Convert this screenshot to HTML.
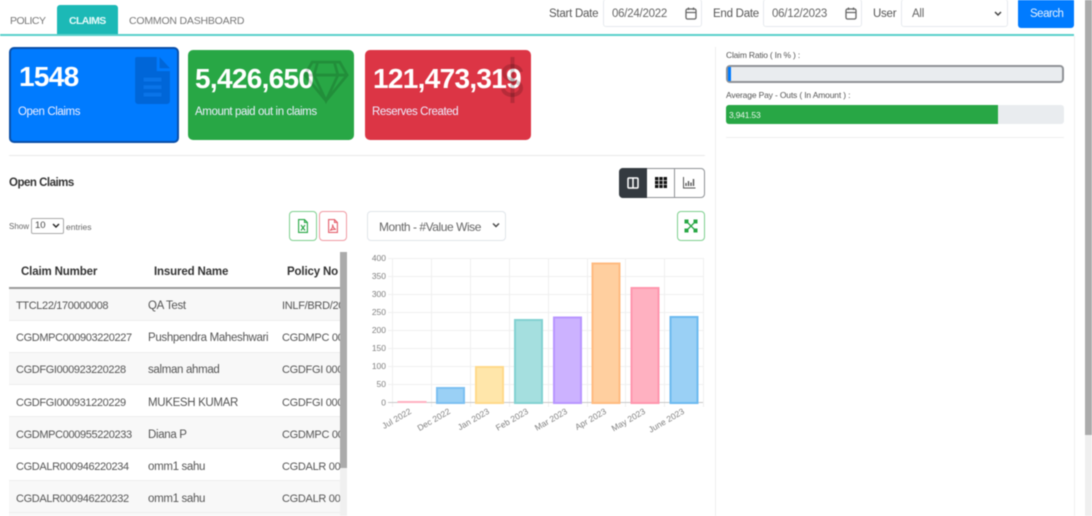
<!DOCTYPE html>
<html><head><meta charset="utf-8"><style>
html,body{margin:0;padding:0;background:#fff;width:1092px;height:516px;overflow:hidden}
body{position:relative;font-family:"Liberation Sans",sans-serif;color:#495057}
#p{position:absolute;left:0;top:0;width:1092px;height:516px;overflow:hidden;filter:blur(.45px)}
.a{position:absolute;white-space:nowrap}
.box{position:absolute;box-sizing:border-box}
.inp{position:absolute;box-sizing:border-box;border:1px solid #e6eaee;border-radius:3px;background:#fff;height:28px;top:-1px}
.l{font-size:11.5px;color:#555;top:8px;letter-spacing:-.25px}
.dt{top:8px;font-size:11.5px;color:#666;letter-spacing:-.25px}
.card{position:absolute;box-sizing:border-box;border-radius:5px;color:#fff}
.num{position:absolute;font-weight:bold;font-size:28px;top:14px;line-height:30px;letter-spacing:-.7px}
.sub{position:absolute;font-size:11.5px;letter-spacing:-.4px;line-height:14px;color:#eef}
.cell{position:absolute;font-size:11.5px;color:#555;line-height:14px;white-space:nowrap}
.c1{left:16px;font-size:11px;letter-spacing:-.36px}
.c2{left:148px;letter-spacing:-.33px}
.c3{left:0;font-size:11px;letter-spacing:-.3px}
.th{position:absolute;font-size:11.5px;font-weight:bold;color:#333;top:265px;line-height:14px;white-space:nowrap;letter-spacing:-.15px}
.row{position:absolute;left:9px;width:331px;height:32px;border-bottom:1px solid #eee;box-sizing:border-box}
.ic{position:absolute;overflow:visible}
</style></head><body><div id="p">

<!-- tabs -->
<div class="a" style="left:10px;top:15px;font-size:10.5px;letter-spacing:-.5px;color:#777">POLICY</div>
<div class="box" style="left:57px;top:5px;width:61px;height:30px;background:#1cb9b6;border-radius:3px 3px 0 0"></div>
<div class="a" style="left:69px;top:15px;font-size:10.5px;letter-spacing:-.6px;font-weight:bold;color:#e8fbfa">CLAIMS</div>
<div class="a" style="left:129px;top:15px;font-size:10.5px;letter-spacing:-.2px;color:#777">COMMON DASHBOARD</div>
<div class="box" style="left:0;top:34px;width:1074px;height:2px;background:#5ad0cb"></div>

<!-- top filter -->
<div class="a l" style="left:549px">Start Date</div>
<div class="inp" style="left:603px;width:99px"></div>
<div class="a dt" style="left:612px">06/24/2022</div>
<svg class="a" style="left:685px;top:7px" width="12" height="13" viewBox="0 0 12 13" fill="none" stroke="#666" stroke-width="1.3"><rect x="1" y="2" width="10" height="10" rx="1.500"/><path d="M1 5.500h10M3.500 .5v2.500M8.500 .5v2.500"/></svg>
<div class="a l" style="left:713px">End Date</div>
<div class="inp" style="left:763px;width:99px"></div>
<div class="a dt" style="left:772px">06/12/2023</div>
<svg class="a" style="left:845px;top:7px" width="12" height="13" viewBox="0 0 12 13" fill="none" stroke="#666" stroke-width="1.3"><rect x="1" y="2" width="10" height="10" rx="1.500"/><path d="M1 5.500h10M3.500 .5v2.500M8.500 .5v2.500"/></svg>
<div class="a l" style="left:873px">User</div>
<div class="inp" style="left:901px;width:107px"></div>
<div class="a dt" style="left:912px">All</div>
<svg class="a" style="left:993px;top:10px" width="10" height="8" viewBox="0 0 10 8" fill="none" stroke="#444" stroke-width="1.5"><path d="M2 2l3 3 3-3"/></svg>
<div class="box" style="left:1018px;top:-2px;width:56px;height:30px;background:#007bff;border-radius:3px"></div>
<div class="a" style="left:1030px;top:8px;font-size:11.5px;letter-spacing:-.5px;color:#e6f1ff">Search</div>

<!-- page scrollbar -->
<div class="box" style="left:1085px;top:0;width:7px;height:516px;background:#efefef"></div>
<div class="box" style="left:1085px;top:0;width:7px;height:435px;background:#ababab"></div>

<!-- cards -->
<div class="card" style="left:9px;top:47px;width:170px;height:96px;background:#007bff;border:2px solid #0a4fa8">
 <div class="num" style="left:8px;top:13px">1548</div>
 <div class="sub" style="left:7px;top:56px">Open Claims</div>
 <svg class="ic" style="left:124px;top:8px" width="35" height="47" viewBox="0 0 37 50"><path d="M2 0H23V15H37V47a3 3 0 0 1-3 3H3a3 3 0 0 1-3-3V2a2 2 0 0 1 2-2zM26 0L37 12H26z" fill="#0066d8"/><path d="M9 22H28v4H9zM9 30H28v4H9zM9 38H28v4H9z" fill="#0a74e8"/></svg>
</div>
<div class="card" style="left:188px;top:50px;width:166px;height:90px;background:#28a745">
 <div class="num" style="left:7px">5,426,650</div>
 <div class="sub" style="left:7px;top:55px">Amount paid out in claims</div>
 <svg class="ic" style="left:115px;top:9px" width="46" height="45" viewBox="0 0 50 46" fill="none" stroke="#000" stroke-opacity=".15" stroke-width="3"><path d="M10 2H40L48 16 25 44 2 16zM2 16H48M16 2L12 16 25 44 38 16 34 2"/></svg>
</div>
<div class="card" style="left:365px;top:50px;width:166px;height:90px;background:#dc3545">
 <div class="num" style="left:8px">121,473,319</div>
 <div class="sub" style="left:7px;top:55px">Reserves Created</div>
 <svg class="ic" style="left:137px;top:7px" width="21" height="46" viewBox="0 0 21 46" fill="none" stroke="#000" stroke-opacity=".17" stroke-width="4"><path d="M10.500 0V46"/><path d="M19 15C18 11 14 9 10 9 5 9 2 12 2 16c0 9 17 6 17 15 0 4-4 7-9 7-4 0-8-2-9-6"/></svg>
</div>

<!-- right panel -->
<div class="box" style="left:715px;top:47px;width:1px;height:469px;background:#eee"></div>
<div class="box" style="left:1074px;top:36px;width:1px;height:480px;background:#f0f0f0"></div>
<div class="a" style="left:726px;top:50px;font-size:8.5px;letter-spacing:-.2px;color:#555">Claim Ratio ( In % ) :</div>
<div class="box" style="left:726px;top:65px;width:338px;height:18px;background:#e9ecef;border:2px solid #8f9296;border-radius:4px"><div style="width:3px;height:14px;background:#007bff"></div></div>
<div class="a" style="left:726px;top:90px;font-size:8.5px;letter-spacing:-.16px;color:#555">Average Pay - Outs ( In Amount ) :</div>
<div class="box" style="left:726px;top:105px;width:338px;height:19px;background:#e9ecef;border-radius:3px;overflow:hidden"><div style="width:272px;height:19px;background:#28a745"></div></div>
<div class="a" style="left:729px;top:110px;font-size:8.5px;letter-spacing:-.2px;color:#eaf7ec">3,941.53</div>
<div class="box" style="left:726px;top:137px;width:338px;height:1px;background:#eee"></div>

<!-- divider -->
<div class="box" style="left:9px;top:155px;width:696px;height:1px;background:#eaeaea"></div>

<div class="a" style="left:9px;top:177px;font-size:11.5px;font-weight:bold;color:#333;letter-spacing:-.5px">Open Claims</div>

<!-- view buttons -->
<div class="box" style="left:619px;top:168px;width:86px;height:30px;border:1px solid #8f9296;border-radius:4px"></div>
<div class="box" style="left:619px;top:168px;width:28px;height:30px;background:#343a40;border-radius:4px 0 0 4px"></div>
<div class="box" style="left:674px;top:168px;width:1px;height:30px;background:#8f9296"></div>
<svg class="a" style="left:627px;top:177px" width="12" height="12" viewBox="0 0 12 12" fill="none" stroke="#fff" stroke-width="1.500"><rect x="1" y="1" width="10" height="10" rx="1"/><path d="M6 1v10"/></svg>
<svg class="a" style="left:655px;top:177px" width="12" height="11" viewBox="0 0 12 11" fill="#111"><path d="M0 0h3.400v3.200H0zM4.300 0h3.400v3.200H4.300zM8.600 0H12v3.200H8.600zM0 3.900h3.400v3.200H0zM4.300 3.900h3.400v3.200H4.300zM8.600 3.900H12v3.200H8.600zM0 7.800h3.400V11H0zM4.300 7.800h3.400V11H4.300zM8.600 7.800H12V11H8.600z"/></svg>
<svg class="a" style="left:683px;top:176px" width="13" height="13" viewBox="0 0 13 13" fill="none" stroke="#555"><path d="M.5 1v11h12"/><path d="M3 10V7M5.500 10V5M8 10V6.500M10.500 10V3" stroke-width="1.400"/></svg>

<!-- show entries -->
<div class="a" style="left:9px;top:222px;font-size:8px;color:#666">Show</div>
<div class="box" style="left:31px;top:218px;width:33px;height:16px;border:1px solid #aaa;border-radius:2px"></div>
<div class="a" style="left:35px;top:220px;font-size:9.5px;color:#444">10</div>
<svg class="a" style="left:52px;top:223px" width="8" height="6" viewBox="0 0 8 6" fill="none" stroke="#222" stroke-width="1.400"><path d="M1 1l3 3 3-3"/></svg>
<div class="a" style="left:66px;top:222px;font-size:8.5px;color:#666">entries</div>

<!-- export -->
<div class="box" style="left:289px;top:211px;width:28px;height:30px;border:1px solid #7fd08f;border-radius:4px"></div>
<svg class="a" style="left:298px;top:219px" width="10" height="14" viewBox="0 0 10 14" fill="none" stroke="#28a745" stroke-width="1.100"><path d="M.6.600H6.500L9.400 3.500V13.400H.6zM6.500.6V3.500H9.400M3 6l4 5.500M7 6l-4 5.500"/></svg>
<div class="box" style="left:319px;top:211px;width:28px;height:30px;border:1px solid #f09aa3;border-radius:4px"></div>
<svg class="a" style="left:328px;top:219px" width="10" height="14" viewBox="0 0 10 14" fill="none" stroke="#e4606d" stroke-width="1.100"><path d="M.6.600H6.500L9.400 3.500V13.400H.6zM6.500.6V3.500H9.400M2 11.500C4 10 5 7.500 4.500 5.500 5 8 6 10 8 10.500 6 10 4 10.500 2 11.500z"/></svg>

<!-- table -->
<div class="th" style="left:21px">Claim Number</div>
<div class="th" style="left:154px">Insured Name</div>
<div class="th" style="left:287px">Policy No</div>
<div class="box" style="left:9px;top:287px;width:331px;height:2px;background:#9a9a9a"></div>
<div class="row" style="top:289px;background:#f8f8f8"></div>
<div class="row" style="top:321px"></div>
<div class="row" style="top:353px;background:#f8f8f8"></div>
<div class="row" style="top:385px"></div>
<div class="row" style="top:417px;background:#f8f8f8"></div>
<div class="row" style="top:449px"></div>
<div class="row" style="top:481px;background:#f8f8f8"></div>
<div class="row" style="top:513px;height:3px;border:0;background:#f8f8f8"></div>

<div class="cell c1" style="top:299px">TTCL22/170000008</div><div class="cell c2" style="top:299px">QA Test</div>
<div class="cell c1" style="top:331px">CGDMPC000903220227</div><div class="cell c2" style="top:331px">Pushpendra Maheshwari</div>
<div class="cell c1" style="top:363px">CGDFGI000923220228</div><div class="cell c2" style="top:363px">salman ahmad</div>
<div class="cell c1" style="top:396px">CGDFGI000931220229</div><div class="cell c2" style="top:396px">MUKESH KUMAR</div>
<div class="cell c1" style="top:428px">CGDMPC000955220233</div><div class="cell c2" style="top:428px">Diana P</div>
<div class="cell c1" style="top:460px">CGDALR000946220234</div><div class="cell c2" style="top:460px">omm1 sahu</div>
<div class="cell c1" style="top:492px">CGDALR000946220232</div><div class="cell c2" style="top:492px">omm1 sahu</div>

<div class="box" style="left:282px;top:289px;width:58px;height:227px;overflow:hidden">
 <div class="cell c3" style="top:10px">INLF/BRD/2022</div>
 <div class="cell c3" style="top:42px">CGDMPC 00090</div>
 <div class="cell c3" style="top:74px">CGDFGI 000923</div>
 <div class="cell c3" style="top:107px">CGDFGI 000931</div>
 <div class="cell c3" style="top:139px">CGDMPC 00095</div>
 <div class="cell c3" style="top:171px">CGDALR 000946</div>
 <div class="cell c3" style="top:203px">CGDALR 000946</div>
</div>
<div class="box" style="left:340px;top:252px;width:7px;height:264px;background:#f0f0f0"></div>
<div class="box" style="left:340px;top:252px;width:7px;height:216px;background:#ababab"></div>

<!-- chart select -->
<div class="box" style="left:367px;top:211px;width:139px;height:30px;border:1px solid #e0e5ea;border-radius:4px"></div>
<div class="a" style="left:379px;top:220px;font-size:12px;letter-spacing:-.45px;color:#666">Month - #Value Wise</div>
<svg class="a" style="left:491px;top:222px" width="10" height="7" viewBox="0 0 10 7" fill="none" stroke="#444" stroke-width="1.400"><path d="M2 1.500l3 3 3-3"/></svg>
<div class="box" style="left:677px;top:211px;width:28px;height:30px;border:1px solid #7fd08f;border-radius:4px"></div>
<svg class="a" style="left:684px;top:219px" width="14" height="14" viewBox="0 0 14 14" fill="#28a745" stroke="#28a745"><path d="M3 3l8 8M11 3l-8 8" stroke-width="1.300"/><rect x="1" y="1" width="3" height="3"/><rect x="10" y="1" width="3" height="3"/><rect x="1" y="10" width="3" height="3"/><rect x="10" y="10" width="3" height="3"/></svg>

<!-- chart -->
<svg class="a" style="left:360px;top:245px" width="355" height="190" viewBox="360 245 355 190">
 <g stroke="#f0f0f0" stroke-width="1">
  <path d="M388 258.500H703M388 276.500H703M388 294.500H703M388 312.500H703M388 330.500H703M388 348.500H703M388 366.500H703M388 384.500H703"/>
  <path d="M392.500 258V407M431.500 258V407M470.500 258V407M509.500 258V407M548.500 258V407M587.500 258V407M625.500 258V407M664.500 258V407M703.500 258V407"/>
 </g>
 <path d="M388 402.500H703" stroke="#c8c8c8"/>
 <g stroke-width="2">
  <rect x="398" y="401.500" width="28" height="1" fill="#ffb1c1" stroke="#ffb1c1" stroke-width="1"/>
  <rect x="437" y="388" width="27" height="15" fill="#9ad0f5" stroke="#7cc0f2"/>
  <rect x="476" y="367" width="27" height="36" fill="#ffe6aa" stroke="#ffd98a"/>
  <rect x="515" y="320" width="27" height="83" fill="#a5dfdf" stroke="#82d2d2"/>
  <rect x="554" y="317.500" width="27" height="85.500" fill="#ccb2ff" stroke="#b896ff"/>
  <rect x="592.500" y="263.500" width="27" height="139.500" fill="#ffcf9f" stroke="#ffbb80"/>
  <rect x="631.500" y="288" width="27" height="115" fill="#ffb1c1" stroke="#ff96ae"/>
  <rect x="670.500" y="317" width="27" height="86" fill="#9ad0f5" stroke="#6cbaf0"/>
 </g>
 <g font-family="Liberation Sans,sans-serif" font-size="8.500" fill="#808080" text-anchor="end">
  <text x="386" y="261">400</text><text x="386" y="279">350</text><text x="386" y="297">300</text><text x="386" y="315">250</text><text x="386" y="333">200</text><text x="386" y="351">150</text><text x="386" y="369">100</text><text x="386" y="387">50</text><text x="386" y="405.500">0</text>
  <text transform="translate(412 413) rotate(-30)">Jul 2022</text>
  <text transform="translate(451 413) rotate(-30)">Dec 2022</text>
  <text transform="translate(490 413) rotate(-30)">Jan 2023</text>
  <text transform="translate(529 413) rotate(-30)">Feb 2023</text>
  <text transform="translate(568 413) rotate(-30)">Mar 2023</text>
  <text transform="translate(607 413) rotate(-30)">Apr 2023</text>
  <text transform="translate(646 413) rotate(-30)">May 2023</text>
  <text transform="translate(685 413) rotate(-30)">June 2023</text>
 </g>
</svg>

</div></body></html>
